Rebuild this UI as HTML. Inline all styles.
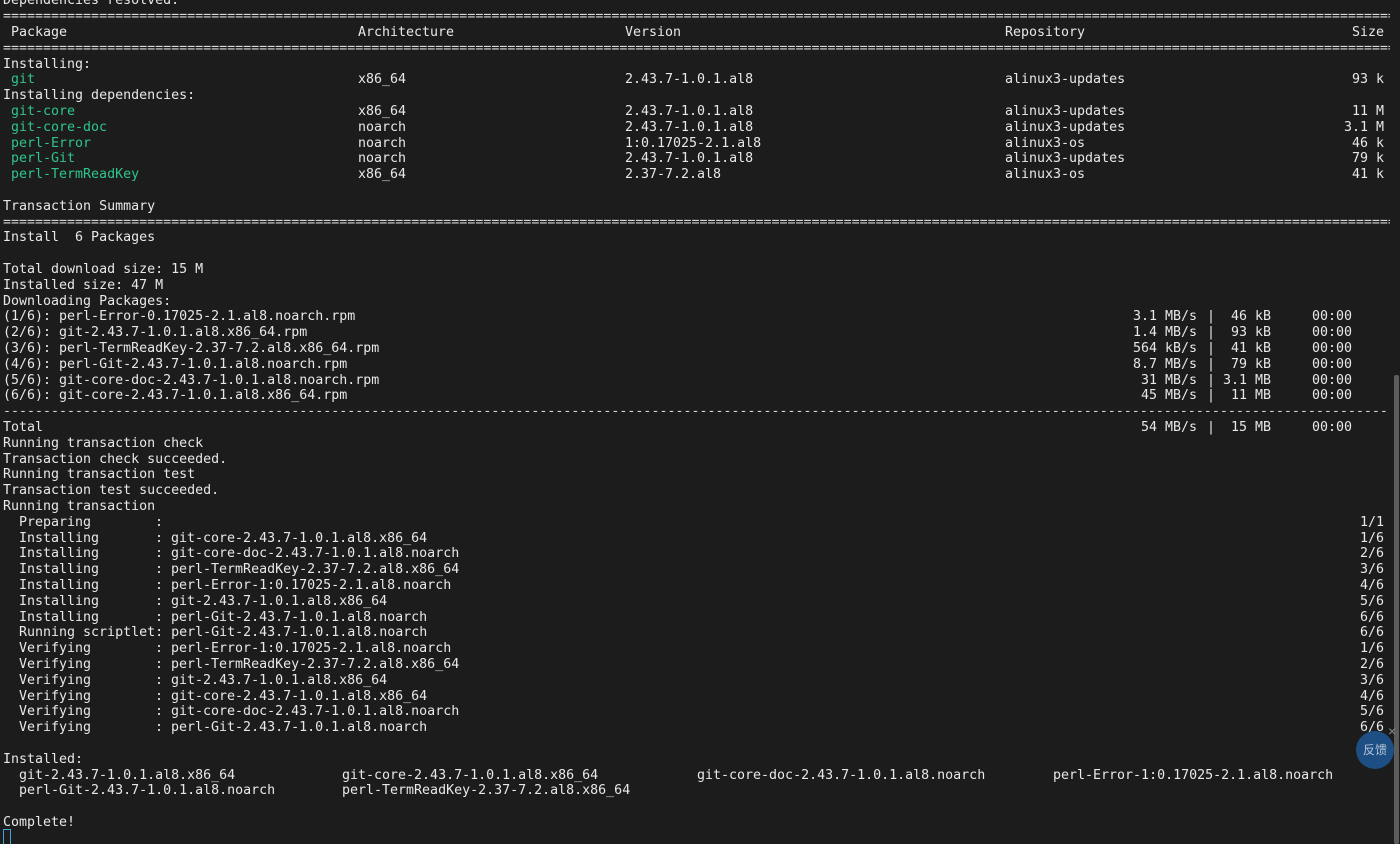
<!DOCTYPE html>
<html><head><meta charset="utf-8"><style>
html,body{margin:0;padding:0;background:#1c1c1c;width:1400px;height:844px;overflow:hidden;}
body{position:relative;font-family:"DejaVu Sans Mono","Liberation Mono",monospace;font-size:13.3px;color:#e8e8e8;}
#w{position:absolute;left:0;top:2px;width:1400px;height:844px;}
.l{position:absolute;left:0;width:1400px;height:16px;line-height:16px;white-space:pre;}
.l span{position:absolute;top:0;}
.g{color:#2fc58a;}
.sep{position:absolute;left:3px;width:1387px;overflow:hidden;white-space:pre;height:16px;line-height:16px;color:#d8d8d8;}
</style></head><body><div id="w">
<div class="l" style="top:-8.6px"><span style="left:3px">Dependencies resolved.</span></div>
<div class="sep" style="top:7.2px">==============================================================================================================================================================================</div>
<div class="l" style="top:23px"><span style="left:11px">Package</span><span style="left:358px">Architecture</span><span style="left:625px">Version</span><span style="left:1005px">Repository</span><span style="right:16px">Size</span></div>
<div class="sep" style="top:38.8px">==============================================================================================================================================================================</div>
<div class="l" style="top:54.6px"><span style="left:3px">Installing:</span></div>
<div class="l" style="top:70.4px"><span class="g" style="left:11px">git</span><span style="left:358px">x86_64</span><span style="left:625px">2.43.7-1.0.1.al8</span><span style="left:1005px">alinux3-updates</span><span style="right:16px">93 k</span></div>
<div class="l" style="top:86.2px"><span style="left:3px">Installing dependencies:</span></div>
<div class="l" style="top:102px"><span class="g" style="left:11px">git-core</span><span style="left:358px">x86_64</span><span style="left:625px">2.43.7-1.0.1.al8</span><span style="left:1005px">alinux3-updates</span><span style="right:16px">11 M</span></div>
<div class="l" style="top:117.8px"><span class="g" style="left:11px">git-core-doc</span><span style="left:358px">noarch</span><span style="left:625px">2.43.7-1.0.1.al8</span><span style="left:1005px">alinux3-updates</span><span style="right:16px">3.1 M</span></div>
<div class="l" style="top:133.6px"><span class="g" style="left:11px">perl-Error</span><span style="left:358px">noarch</span><span style="left:625px">1:0.17025-2.1.al8</span><span style="left:1005px">alinux3-os</span><span style="right:16px">46 k</span></div>
<div class="l" style="top:149.4px"><span class="g" style="left:11px">perl-Git</span><span style="left:358px">noarch</span><span style="left:625px">2.43.7-1.0.1.al8</span><span style="left:1005px">alinux3-updates</span><span style="right:16px">79 k</span></div>
<div class="l" style="top:165.2px"><span class="g" style="left:11px">perl-TermReadKey</span><span style="left:358px">x86_64</span><span style="left:625px">2.37-7.2.al8</span><span style="left:1005px">alinux3-os</span><span style="right:16px">41 k</span></div>
<div class="l" style="top:196.8px"><span style="left:3px">Transaction Summary</span></div>
<div class="sep" style="top:212.6px">==============================================================================================================================================================================</div>
<div class="l" style="top:228.4px"><span style="left:3px">Install  6 Packages</span></div>
<div class="l" style="top:260px"><span style="left:3px">Total download size: 15 M</span></div>
<div class="l" style="top:275.8px"><span style="left:3px">Installed size: 47 M</span></div>
<div class="l" style="top:291.6px"><span style="left:3px">Downloading Packages:</span></div>
<div class="l" style="top:307.4px"><span style="left:3px">(1/6): perl-Error-0.17025-2.1.al8.noarch.rpm</span><span style="right:203px">3.1 MB/s</span><span style="left:1207px">|</span><span style="right:129px">46 kB</span><span style="left:1312px">00:00</span></div>
<div class="l" style="top:323.2px"><span style="left:3px">(2/6): git-2.43.7-1.0.1.al8.x86_64.rpm</span><span style="right:203px">1.4 MB/s</span><span style="left:1207px">|</span><span style="right:129px">93 kB</span><span style="left:1312px">00:00</span></div>
<div class="l" style="top:339px"><span style="left:3px">(3/6): perl-TermReadKey-2.37-7.2.al8.x86_64.rpm</span><span style="right:203px">564 kB/s</span><span style="left:1207px">|</span><span style="right:129px">41 kB</span><span style="left:1312px">00:00</span></div>
<div class="l" style="top:354.8px"><span style="left:3px">(4/6): perl-Git-2.43.7-1.0.1.al8.noarch.rpm</span><span style="right:203px">8.7 MB/s</span><span style="left:1207px">|</span><span style="right:129px">79 kB</span><span style="left:1312px">00:00</span></div>
<div class="l" style="top:370.6px"><span style="left:3px">(5/6): git-core-doc-2.43.7-1.0.1.al8.noarch.rpm</span><span style="right:203px">31 MB/s</span><span style="left:1207px">|</span><span style="right:129px">3.1 MB</span><span style="left:1312px">00:00</span></div>
<div class="l" style="top:386.4px"><span style="left:3px">(6/6): git-core-2.43.7-1.0.1.al8.x86_64.rpm</span><span style="right:203px">45 MB/s</span><span style="left:1207px">|</span><span style="right:129px">11 MB</span><span style="left:1312px">00:00</span></div>
<div class="sep" style="top:402.2px">------------------------------------------------------------------------------------------------------------------------------------------------------------------------------</div>
<div class="l" style="top:418px"><span style="left:3px">Total</span><span style="right:203px">54 MB/s</span><span style="left:1207px">|</span><span style="right:129px">15 MB</span><span style="left:1312px">00:00</span></div>
<div class="l" style="top:433.8px"><span style="left:3px">Running transaction check</span></div>
<div class="l" style="top:449.6px"><span style="left:3px">Transaction check succeeded.</span></div>
<div class="l" style="top:465.4px"><span style="left:3px">Running transaction test</span></div>
<div class="l" style="top:481.2px"><span style="left:3px">Transaction test succeeded.</span></div>
<div class="l" style="top:497px"><span style="left:3px">Running transaction</span></div>
<div class="l" style="top:512.8px"><span style="left:19px">Preparing</span><span style="left:155px">:</span><span style="right:16px">1/1</span></div>
<div class="l" style="top:528.6px"><span style="left:19px">Installing</span><span style="left:155px">: git-core-2.43.7-1.0.1.al8.x86_64</span><span style="right:16px">1/6</span></div>
<div class="l" style="top:544.4px"><span style="left:19px">Installing</span><span style="left:155px">: git-core-doc-2.43.7-1.0.1.al8.noarch</span><span style="right:16px">2/6</span></div>
<div class="l" style="top:560.2px"><span style="left:19px">Installing</span><span style="left:155px">: perl-TermReadKey-2.37-7.2.al8.x86_64</span><span style="right:16px">3/6</span></div>
<div class="l" style="top:576px"><span style="left:19px">Installing</span><span style="left:155px">: perl-Error-1:0.17025-2.1.al8.noarch</span><span style="right:16px">4/6</span></div>
<div class="l" style="top:591.8px"><span style="left:19px">Installing</span><span style="left:155px">: git-2.43.7-1.0.1.al8.x86_64</span><span style="right:16px">5/6</span></div>
<div class="l" style="top:607.6px"><span style="left:19px">Installing</span><span style="left:155px">: perl-Git-2.43.7-1.0.1.al8.noarch</span><span style="right:16px">6/6</span></div>
<div class="l" style="top:623.4px"><span style="left:19px">Running scriptlet: perl-Git-2.43.7-1.0.1.al8.noarch</span><span style="right:16px">6/6</span></div>
<div class="l" style="top:639.2px"><span style="left:19px">Verifying</span><span style="left:155px">: perl-Error-1:0.17025-2.1.al8.noarch</span><span style="right:16px">1/6</span></div>
<div class="l" style="top:655px"><span style="left:19px">Verifying</span><span style="left:155px">: perl-TermReadKey-2.37-7.2.al8.x86_64</span><span style="right:16px">2/6</span></div>
<div class="l" style="top:670.8px"><span style="left:19px">Verifying</span><span style="left:155px">: git-2.43.7-1.0.1.al8.x86_64</span><span style="right:16px">3/6</span></div>
<div class="l" style="top:686.6px"><span style="left:19px">Verifying</span><span style="left:155px">: git-core-2.43.7-1.0.1.al8.x86_64</span><span style="right:16px">4/6</span></div>
<div class="l" style="top:702.4px"><span style="left:19px">Verifying</span><span style="left:155px">: git-core-doc-2.43.7-1.0.1.al8.noarch</span><span style="right:16px">5/6</span></div>
<div class="l" style="top:718.2px"><span style="left:19px">Verifying</span><span style="left:155px">: perl-Git-2.43.7-1.0.1.al8.noarch</span><span style="right:16px">6/6</span></div>
<div class="l" style="top:749.8px"><span style="left:3px">Installed:</span></div>
<div class="l" style="top:765.6px"><span style="left:19px">git-2.43.7-1.0.1.al8.x86_64</span><span style="left:342px">git-core-2.43.7-1.0.1.al8.x86_64</span><span style="left:697px">git-core-doc-2.43.7-1.0.1.al8.noarch</span><span style="left:1053px">perl-Error-1:0.17025-2.1.al8.noarch</span></div>
<div class="l" style="top:781.4px"><span style="left:19px">perl-Git-2.43.7-1.0.1.al8.noarch</span><span style="left:342px">perl-TermReadKey-2.37-7.2.al8.x86_64</span></div>
<div class="l" style="top:813px"><span style="left:3px">Complete!</span></div>
</div>
<div style="position:absolute;left:3px;top:829px;width:6px;height:14px;border:1px solid #3aa7d8;"></div>
<div style="position:absolute;left:1394px;top:375px;width:5px;height:469px;background:#5c5c5c;border-radius:2px;"></div>
<div style="position:absolute;left:1356px;top:731px;width:38px;height:38px;border-radius:50%;background:#1d4f85;color:#b8c6d8;font-family:'Noto Sans CJK SC',sans-serif;font-size:12px;line-height:38px;text-align:center;">反馈</div>
<div style="position:absolute;left:1388px;top:723px;color:#8a8a8a;font-family:'Liberation Sans',sans-serif;font-size:14px;">×</div>
</body></html>
